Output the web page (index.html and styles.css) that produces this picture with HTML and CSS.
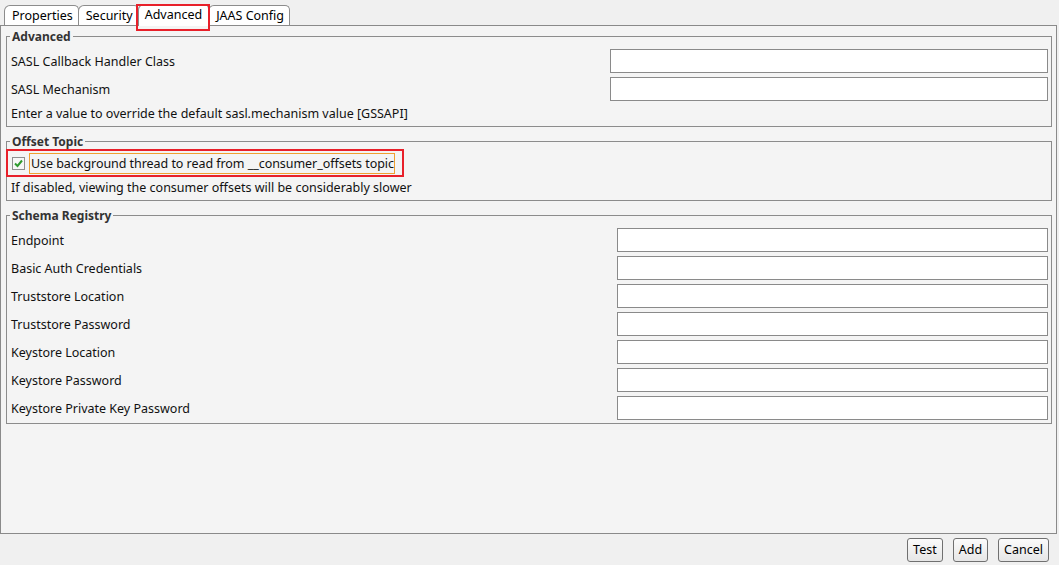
FILE: index.html
```html
<!DOCTYPE html>
<html>
<head>
<meta charset="utf-8">
<link rel="stylesheet" href="styles.css">
</head>
<body>
<div class="window">
  <div class="tabs">
    <div class="tab">Properties</div>
    <div class="tab">Security</div>
    <div class="tab tab-selected">Advanced<span class="mark mark-tab"></span></div>
    <div class="tab">JAAS Config</div>
  </div>
  <div class="panel">
    <fieldset class="group group-adv">
      <legend>Advanced</legend>
      <div class="form form-adv">
        <span class="label">SASL Callback Handler Class</span><span class="field"></span>
        <span class="label">SASL Mechanism</span><span class="field"></span>
      </div>
      <div class="hint">Enter a value to override the default sasl.mechanism value [GSSAPI]</div>
    </fieldset>
    <fieldset class="group group-offset">
      <legend>Offset Topic</legend>
      <div class="check-row">
        <span class="checkbox"><svg width="9" height="9" viewBox="0 0 9 9"><path d="M1 4.5 L3.5 7 L8 1.5" fill="none" stroke="#2f9b2f" stroke-width="2"/></svg></span>
        <span class="check-label">Use background thread to read from __consumer_offsets topic</span>
        <span class="mark mark-check"></span>
      </div>
      <div class="hint hint-offset">If disabled, viewing the consumer offsets will be considerably slower</div>
    </fieldset>
    <fieldset class="group group-schema">
      <legend>Schema Registry</legend>
      <div class="form form-schema">
        <span class="label">Endpoint</span><span class="field"></span>
        <span class="label">Basic Auth Credentials</span><span class="field"></span>
        <span class="label">Truststore Location</span><span class="field"></span>
        <span class="label">Truststore Password</span><span class="field"></span>
        <span class="label">Keystore Location</span><span class="field"></span>
        <span class="label">Keystore Password</span><span class="field"></span>
        <span class="label">Keystore Private Key Password</span><span class="field"></span>
      </div>
    </fieldset>
  </div>
  <div class="buttons">
    <button class="btn btn-test">Test</button>
    <button class="btn btn-add">Add</button>
    <button class="btn btn-cancel">Cancel</button>
  </div>
</div>
</body>
</html>
```
FILE: styles.css
```css
html, body {
  margin: 0;
  padding: 0;
}
body {
  background: #f0f0f0;
  font-family: "Noto Sans", "Open Sans", sans-serif;
  font-size: 12.5px;
  color: #111;
}
.window {
  width: 1059px;
  height: 565px;
  display: flex;
  flex-direction: column;
  overflow: hidden;
}
.tabs {
  height: 25px;
  display: flex;
  align-items: flex-end;
  padding-left: 4px;
}
.tab {
  position: relative;
  height: 19px;
  line-height: 19px;
  padding: 0 5px 0 7px;
  border: 1px solid #8c8c8c;
  border-bottom: none;
  border-radius: 6px 5px 0 0;
  background: #ffffff;
  margin-right: -1px;
  color: #000;
}
.tab-selected {
  height: 21px;
  line-height: 20px;
  margin-bottom: -1px;
  background: #ffffff;
  z-index: 1;
  padding: 0 6px 0 6px;
}
.mark {
  position: absolute;
  border: 2px solid #e8202a;
  pointer-events: none;
}
.mark-tab {
  left: -3px;
  top: -1px;
  right: -2px;
  bottom: -5px;
}
.panel {
  height: 507px;
  margin-right: 2px;
  border: 1px solid #8a8a8a;
  background: #f4f4f4;
  display: flex;
  flex-direction: column;
}
.group {
  margin: 0 4px 0 5px;
  padding: 0 3px 0 4px;
  border: 1px solid #8c8c8c;
  min-width: 0;
}
.group legend {
  font-weight: bold;
  font-size: 12px;
  color: #333;
  padding: 0 2px;
  margin-left: -1px;
  line-height: 17px;
}
.group-adv {
  margin-top: 2px;
  padding-bottom: 4px;
}
.group-offset {
  margin-top: 6px;
  padding-bottom: 4px;
}
.group-schema {
  margin-top: 6px;
  padding-bottom: 3px;
}
.form {
  display: grid;
  row-gap: 4px;
  align-items: center;
  padding-top: 4px;
}
.form-adv {
  grid-template-columns: 1fr 438px;
}
.form-schema {
  grid-template-columns: 1fr 431px;
}
.field {
  height: 22px;
  border: 1px solid #8a8a8a;
  background: #fff;
}
.label {
  line-height: 17px;
}
.hint {
  line-height: 17px;
  padding-top: 4px;
}
.hint-offset {
  padding-top: 5px;
}
.check-row {
  position: relative;
  display: flex;
  align-items: center;
  height: 22px;
  margin-top: 2px;
  padding-left: 1px;
}
.checkbox {
  width: 11px;
  height: 11px;
  border: 1px solid #8f8f8f;
  background: #f7f7f7;
  display: flex;
  align-items: center;
  justify-content: center;
  margin-right: 4px;
}
.check-label {
  border: 1px solid #f0a030;
  border-right-color: #f0a030;
  padding: 1px 0 1px 1px;
  line-height: 17px;
  letter-spacing: -0.05px;
}
.mark-check {
  left: -5px;
  top: -3px;
  width: 394px;
  bottom: -3px;
}
.buttons {
  flex: 1;
  display: flex;
  justify-content: flex-end;
  align-items: center;
  gap: 10px;
  padding-right: 10px;
}
.btn {
  font-family: inherit;
  font-size: 12.5px;
  height: 24px;
  padding: 0 5px;
  border: 1px solid #707070;
  border-radius: 3px;
  background: linear-gradient(#fbfbfb, #e6e6e6);
  color: #000;
}
```
